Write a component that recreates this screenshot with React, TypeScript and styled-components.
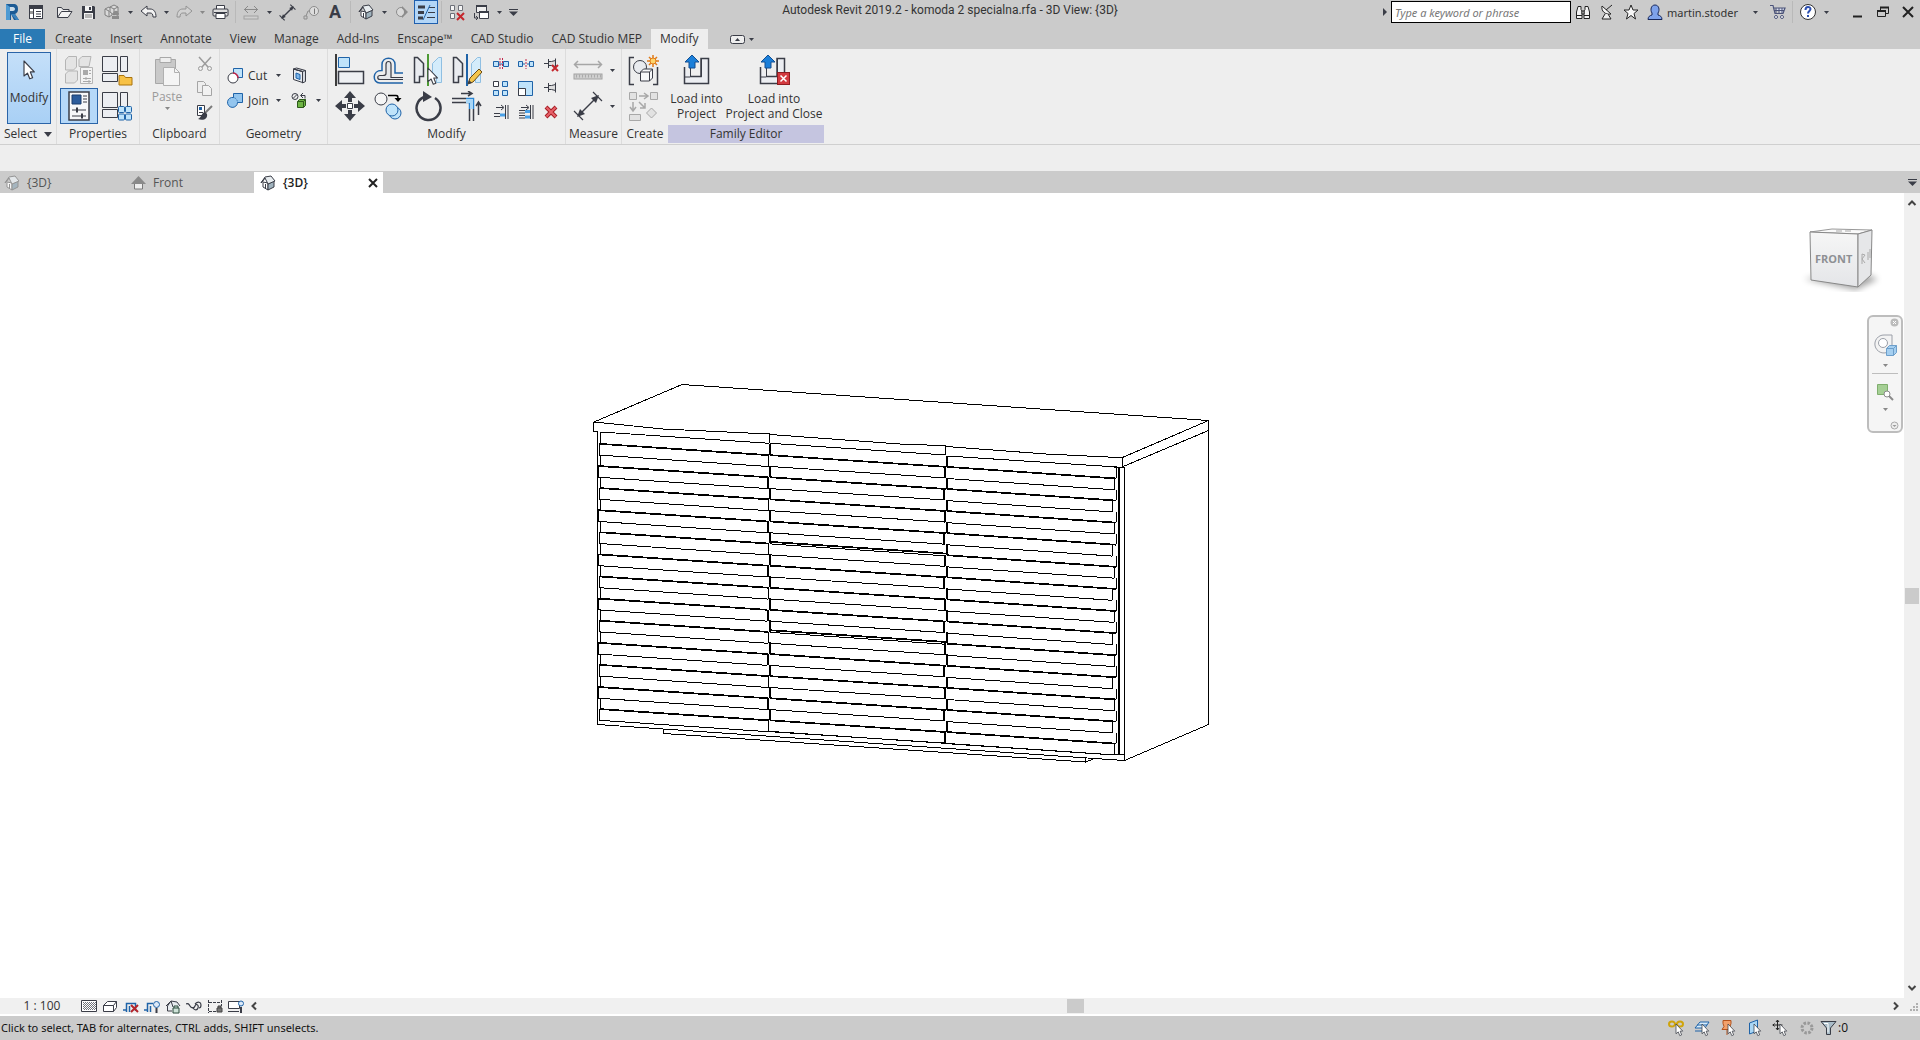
import React from "react";
import styled, { createGlobalStyle, css } from "styled-components";

const ink = "#3a3d47";
const blue = "#1f63a8";
const pale = "#bfe3fa";
const chrome = "#cbcbcb";
const panelGrey = "#eeeeee";
const smallText = `"Noto Sans", "Open Sans", sans-serif`;

const GlobalStyle = createGlobalStyle`
  * { box-sizing: border-box; }
  body {
    margin: 0;
    font-family: "Open Sans", "Noto Sans", sans-serif;
    font-size: 12px;
    line-height: 16px;
    color: #333;
    background: #fff;
  }
  button, input { font: inherit; color: inherit; }
`;

const Page = styled.div`
  display: flex;
  flex-direction: column;
  height: 100vh;
  overflow: hidden;
`;

const Plain = styled.button`
  border: 0;
  padding: 0;
  margin: 0;
  background: none;
  display: flex;
  align-items: center;
  justify-content: center;
  flex: none;
  white-space: nowrap;
`;

/* ---------- title bar ---------- */

const TitleBar = styled.header`
  display: flex;
  align-items: flex-start;
  height: 29px;
  flex: none;
  background: ${chrome};
`;

const QuickGroup = styled.div`
  display: flex;
  align-items: center;
  height: 24px;
  flex: none;
`;

const QuickButton = styled(Plain)<{ $active?: boolean; $gap?: boolean }>`
  width: 24px;
  height: 24px;
  margin-right: ${(p) => (p.$gap ? "4px" : "0")};
  ${(p) =>
    p.$active &&
    css`
      background: #b3d6f7;
      border: 1px solid #1f5fae;
    `}
`;

const LetterButton = styled(QuickButton)`
  font-family: Roboto, sans-serif;
  font-size: 18px;
  line-height: 24px;
  font-weight: 700;
  color: ${ink};
`;

const CaretButton = styled(Plain)<{ $tall?: boolean }>`
  width: 12px;
  height: ${(p) => (p.$tall ? "36px" : "24px")};
`;

const CustomizeButton = styled(Plain)`
  width: 16px;
  height: 24px;
`;

const Divider = styled.span`
  width: 1px;
  height: 22px;
  margin: 0 3px;
  background: #b9b9b9;
`;

const Title = styled.h1`
  flex: 1;
  margin: 0;
  padding-top: 2px;
  text-align: center;
  font-size: 12px;
  font-weight: 400;
  white-space: nowrap;
  font-family: Roboto, ${smallText};
`;

const SearchInput = styled.input`
  width: 180px;
  height: 22px;
  border: 1px solid #000;
  padding: 0 3px;
  background: #fff;
  border-radius: 0;
  font-family: ${smallText};
  font-size: 11px;
  font-style: italic;
  &::placeholder { color: #777; opacity: 1; }
`;

const UserButton = styled(Plain)`
  width: 82px;
  margin-top: 1px;
  font-family: ${smallText};
  font-size: 11px;
  justify-content: flex-start;
`;

const CartGroup = styled.div`
  display: flex;
  align-items: center;
  margin-left: 4px;
`;

const WindowButtons = styled.div`
  display: flex;
  margin-left: 13px;
`;

const WindowButton = styled(Plain)`
  width: 25px;
  height: 24px;
`;

/* ---------- ribbon ---------- */

const TabBar = styled.nav`
  display: flex;
  height: 20px;
  flex: none;
  background: ${chrome};
`;

const FileTab = styled(Plain)`
  width: 45px;
  margin-right: 1px;
  background: #2a7ab5;
  color: #fff;
`;

const Tab = styled(Plain)<{ $active?: boolean }>`
  padding: 0 9px;
  background: ${(p) => (p.$active ? panelGrey : "transparent")};
`;

const Collapse = styled(Plain)`
  margin-left: 22px;
  gap: 4px;
`;

const Ribbon = styled.section`
  display: flex;
  height: 96px;
  flex: none;
  background: ${panelGrey};
  border-bottom: 1px solid #cfcfcf;
`;

const Panel = styled.section<{ $w: number; $last?: boolean }>`
  display: flex;
  flex-direction: column;
  flex: none;
  width: ${(p) => p.$w}px;
  border-right: ${(p) => (p.$last ? "0" : "1px solid #dcdcdc")};
`;

const PanelBody = styled.div<{ $pad?: number; $gap?: number }>`
  display: flex;
  height: 76px;
  align-items: center;
  gap: ${(p) => p.$gap ?? 0}px;
  padding-top: 2px;
  padding-left: ${(p) => p.$pad ?? 0}px;
`;

const PanelLabel = styled.h2<{ $family?: boolean }>`
  margin: 0;
  height: 18px;
  line-height: 18px;
  font-size: 12px;
  font-weight: 400;
  display: flex;
  align-items: center;
  justify-content: center;
  gap: 7px;
  background: ${(p) => (p.$family ? "#c5c5e0" : "transparent")};
`;

const Column = styled.div`
  display: flex;
  flex-direction: column;
`;

const ToolGrid = styled.div<{ $cols: number; $w: number; $h: number; $gap?: number }>`
  display: grid;
  grid-template-columns: repeat(${(p) => p.$cols}, ${(p) => p.$w}px);
  grid-auto-rows: ${(p) => p.$h}px;
  column-gap: ${(p) => p.$gap ?? 0}px;
`;

const Tool = styled(Plain)<{ $active?: boolean }>`
  width: 100%;
  ${(p) =>
    p.$active &&
    css`
      background: #b5d8f8;
      border: 1px solid #2a64a8;
    `}
`;

const SelectTool = styled(Plain)`
  flex-direction: column;
  justify-content: flex-start;
  width: 44px;
  height: 72px;
  margin-left: 7px;
  padding-top: 7px;
  gap: 10px;
  background: linear-gradient(#c4dff9, #a9d0f5);
  border: 1px solid #2a64a8;
`;

const PasteTool = styled(Plain)`
  flex-direction: column;
  justify-content: flex-start;
  width: 40px;
  height: 72px;
  padding-top: 3px;
  color: #9a9a9a;
  margin-right: 9px;
  gap: 2px;
`;

const LoadTool = styled(Plain)<{ $w: number }>`
  flex-direction: column;
  width: ${(p) => p.$w}px;
  line-height: 15px;
  gap: 6px;
  height: 70px;
`;

const LabelTool = styled(Plain)`
  gap: 4px;
  width: 45px;
  height: 25px;
  justify-content: flex-start;
`;

const SideTool = styled(Plain)`
  width: 28px;
  padding-left: 3px;
`;

const Row = styled.div<{ $h: number }>`
  display: flex;
  align-items: center;
  height: ${(p) => p.$h}px;
`;

const OptionsBar = styled.div`
  height: 26px;
  flex: none;
  background: ${panelGrey};
`;

/* ---------- document tabs ---------- */

const DocTabs = styled.nav`
  display: flex;
  height: 22px;
  flex: none;
  background: ${chrome};
  padding-top: 1px;
`;

const DocTab = styled.div<{ $active?: boolean }>`
  display: flex;
  align-items: center;
  width: ${(p) => (p.$active ? 129 : 127)}px;
  padding: 0 5px 0 ${(p) => (p.$active ? 6 : 4)}px;
  background: ${(p) => (p.$active ? "#fff" : "transparent")};
  font-weight: ${(p) => (p.$active ? 600 : 400)};
  color: ${(p) => (p.$active ? "#222" : "#555")};
`;

const DocTabName = styled(Plain)`
  flex: 1;
  justify-content: flex-start;
  gap: 7px;
`;

const DocMenu = styled(Plain)`
  width: 16px;
  margin-left: auto;
`;

/* ---------- view ---------- */

const ViewArea = styled.main`
  flex: 1;
  min-height: 0;
  display: grid;
  grid-template-columns: 1fr 16px;
  grid-template-rows: 1fr 16px;
`;

const Canvas = styled.div`
  position: relative;
  min-height: 0;
  overflow: hidden;
  background: #fff;
`;

const Model = styled.svg`
  display: block;
  width: 100%;
  height: 100%;
`;

const ViewCube = styled.div`
  position: absolute;
  top: 30px;
  right: 22px;
`;

const NavBar = styled.div`
  position: absolute;
  top: 122px;
  right: 1px;
  width: 36px;
  height: 118px;
  display: flex;
  flex-direction: column;
  align-items: center;
  border: 2px solid #bdbdbd;
  border-radius: 6px;
  background: #f5f5f5;
`;

const NavCorner = styled(Plain)`
  align-self: flex-end;
  width: 14px;
  height: 10px;
`;

const NavTool = styled(Plain)`
  height: 46px;
  width: 28px;
  flex-direction: column;
  gap: 7px;
`;

const NavRule = styled.hr`
  width: 26px;
  margin: 0;
  border: 0;
  border-top: 1px solid #bdbdbd;
`;

const VScroll = styled.div`
  display: flex;
  flex-direction: column;
  align-items: center;
  justify-content: space-between;
  padding: 2px 0;
  background: #f0f0f0;
`;

const Thumb = styled.span<{ $w: number; $h: number }>`
  width: ${(p) => p.$w}px;
  height: ${(p) => p.$h}px;
  background: ${chrome};
`;

const ScrollButton = styled(Plain)`
  width: 16px;
  height: 16px;
`;

const BottomBar = styled.div`
  display: flex;
  align-items: center;
  background: #f0f0f0;
`;

const ScaleButton = styled(Plain)`
  width: 78px;
  padding-left: 6px;
`;

const ViewTool = styled(Plain)`
  width: 21px;
  height: 16px;
`;

const HScroll = styled.div`
  flex: 1;
  display: flex;
  align-items: center;
  justify-content: space-between;
`;

const Corner = styled.div`
  background: #f0f0f0;
  display: flex;
  align-items: flex-end;
  justify-content: flex-end;
`;

const StatusBar = styled.footer`
  display: flex;
  align-items: center;
  justify-content: space-between;
  height: 26px;
  flex: none;
  border-top: 2px solid #fff;
  background: ${chrome};
  color: #111;
  padding: 0 72px 0 1px;
`;

const StatusText = styled.p`
  margin: 0;
  font-family: ${smallText};
  font-size: 11px;
`;

const StatusTools = styled.div`
  display: flex;
  align-items: center;
`;

const StatusTool = styled(Plain)`
  width: 26px;
  height: 24px;
`;

/* ---------- drawings ---------- */

type IconProps = { w: number; h: number; children: React.ReactNode };
const Icon = ({ w, h, children }: IconProps) => (
  <svg width={w} height={h} viewBox={`0 0 ${w} ${h}`} fill="none" aria-hidden="true">
    {children}
  </svg>
);

const Caret = ({ big, color = ink }: { big?: boolean; color?: string }) => (
  <Icon w={big ? 8 : 5} h={big ? 5 : 3}>
    <path d={big ? "M0 0h8L4 5z" : "M0 0h5L2.500 3z"} fill={color} />
  </Icon>
);

const Cursor = ({ x = 0, y = 0, s = 1 }: { x?: number; y?: number; s?: number }) => (
  <path
    transform={`translate(${x} ${y}) scale(${s})`}
    d="M0 0v13l3-2.500 2 5 2.500-1-2-5H9z"
    fill="#fff"
    stroke="#3a3d47"
    strokeLinejoin="round"
  />
);

const House = ({ faded }: { faded?: boolean }) => (
  <Icon w={16} h={16}>
    <g stroke={faded ? "#8b8b8b" : ink} strokeLinejoin="round" opacity={faded ? 0.85 : 1}>
      <path d="M3 7v5l5 3V8z" fill="#fff" />
      <path d="M8 9v6l6-3V6z" fill="#9fb2bd" />
      <path d="M1 8l4-6 6-1 4 5-7 3-3-6z" fill="#e8edf0" />
      <path d="M5 3L1 8M5.500 9v4" />
    </g>
  </Icon>
);

const RevitLogo = () => (
  <Icon w={16} h={18}>
    <path d="M2 1h7c4 0 5 2 5 5s-1 4-3 5l4 6h-5l-3-6v6H2z" fill="#1c5a94" />
    <path d="M6 4h3c1 0 2 1 2 2s-1 2-2 2H6z" fill="#cbdce9" />
    <path d="M2 1l4 3v13H2z" fill="#4d9ad3" />
    <path d="M7 11l4 0 4 6h-3z" fill="#3b82bd" />
  </Icon>
);

const HomePanel = () => (
  <Icon w={16} h={16}>
    <rect x="1.500" y="1.500" width="13" height="13" fill="#fff" stroke={ink} />
    <path d="M1 2h14v3H1z" fill={ink} />
    <path d="M5.500 5v9M8 7.500h5M8 10h5M8 12.500h5" stroke={ink} />
    <path d="M2 7h3v3H2z" fill="#999" />
  </Icon>
);

const OpenFolder = () => (
  <Icon w={17} h={14}>
    <path d="M1.500 12V2.500h4l1.500 2h6V6" stroke={ink} fill="#eee" />
    <path d="M1.500 12.500l4-6h10.500l-4 6z" fill="#f3f3f3" stroke={ink} strokeLinejoin="round" />
  </Icon>
);

const Save = () => (
  <Icon w={15} h={15}>
    <path d="M1 1h12l1 1v12H1z" fill={ink} />
    <path d="M4 1h7v5H4z" fill="#f4f4f4" />
    <path d="M8 2h2v3H8z" fill={ink} />
    <path d="M3 8h9v6H3z" fill="#f4f4f4" />
    <path d="M4 10h7M4 12h7" stroke="#777" />
  </Icon>
);

const Sync = () => (
  <Icon w={17} h={16}>
    <g stroke="#7f7f7f" fill="#dadada" strokeLinejoin="round">
      <path d="M1 5l4-2 3 2v6l-3 2-4-2z" />
      <path d="M6 3l4-2 4 2v5l-4 3-4-3z" />
      <path d="M6 3l4 2 4-2M10 5v6M1 5l4 2v6" />
    </g>
    <path d="M9 10a3 3 0 1 1 5 2M8 12h7v3H8z" fill="#8b8b8b" />
  </Icon>
);

const Undo = ({ redo }: { redo?: boolean }) => (
  <Icon w={17} h={14}>
    <path
      transform={redo ? "translate(17 0) scale(-1 1)" : undefined}
      d="M1 6l6-5v3h3c4 0 6 3 6 8h-3c0-3-1-4-3-4H7v3z"
      fill={redo ? "#d2d2d2" : "#f2f2f2"}
      stroke={redo ? "#949494" : ink}
      strokeLinejoin="round"
    />
  </Icon>
);

const Print = () => (
  <Icon w={17} h={16}>
    <path d="M4.500 5V1.500h8V5" fill="#fff" stroke={ink} />
    <rect x="1" y="5" width="15" height="7" rx="1" fill="#dedede" stroke={ink} />
    <path d="M4 9.500h9v5H4z" fill="#fff" stroke={ink} />
    <path d="M2 8.500h13" stroke={ink} />
  </Icon>
);

const Ruler = ({ w, h, thin }: { w: number; h: number; thin?: boolean }) => (
  <Icon w={w} h={h}>
    <path
      d={`M1 4.500h${w - 2}M5 1L1.500 4.500 5 8M${w - 5} 1l3.500 3.500L${w - 5} 8`}
      stroke={thin ? "#8a8a8a" : "#a6a6a6"}
      strokeWidth={thin ? 1 : 1.5}
    />
    <rect x="1" y={h - (thin ? 4 : 6)} width={w - 2} height={thin ? 3 : 5} fill="#cfcfcf" stroke="#a2a2a2" />
    {!thin && <path d={`M3 ${h - 4}h${w - 5}`} stroke="#aaa" strokeDasharray="1 2" strokeWidth="3" />}
  </Icon>
);

const Dimension = ({ size }: { size: number }) => (
  <svg width={size} height={size} viewBox="0 0 30 30" fill="none" aria-hidden="true">
    <path d="M6 24L24 6" stroke={ink} strokeWidth={size > 20 ? 1.5 : 2.5} />
    <path d="M4 26l3-8 5 5zM26 4l-3 8-5-5z" fill={ink} />
    <path d="M1 20l9 9M20 1l9 9" stroke={ink} strokeWidth={size > 20 ? 1.2 : 2} />
  </svg>
);

const TagIcon = () => (
  <Icon w={16} h={15}>
    <path d="M1 11h3v3H1zM3 11l2-5h4" stroke="#8d8d8d" />
    <circle cx="11" cy="6" r="4.500" fill="#ddd" stroke="#8d8d8d" />
    <path d="M11.500 3.500V9" stroke="#777" />
  </Icon>
);

const Section = () => (
  <Icon w={14} h={14}>
    <circle cx="6" cy="7" r="4.500" fill="#d9d9d9" stroke="#8c8c8c" />
    <path d="M7 1l6 6-6 6v-2.500a4 4 0 0 0 0-7z" fill="#8c8c8c" />
  </Icon>
);

const ThinLines = () => (
  <Icon w={19} h={17}>
    <path d="M1 3h7M1 8.500h6M1 14h5" stroke={ink} strokeWidth="3" />
    <path d="M12 3.500h6M11 8.500h7M10 13.500h8" stroke={ink} />
    <path d="M13 1L6 16" stroke={blue} />
  </Icon>
);

const CloseHidden = () => (
  <Icon w={16} h={17}>
    <g stroke="#6d7078" fill="#f5f5f5">
      <path d="M1.500 1.500h4v5h-4zM9.500 1.500h4v5h-4zM1.500 9.500h4v5h-4z" />
    </g>
    <path d="M8 9l7 7M15 9l-7 7" stroke="#c5272d" strokeWidth="2" />
  </Icon>
);

const SwitchWindows = () => (
  <Icon w={17} h={17}>
    <path d="M3.500 1.500h10v7h-10z" fill="#eee" stroke={ink} />
    <path d="M6.500 7.500h9v7h-9z" fill="#fff" stroke={ink} />
    <path d="M6 8h10M3 2h11" stroke={ink} strokeWidth="2" />
    <path d="M1.500 9v5h3M3 12l2 2-2 2" stroke={ink} />
  </Icon>
);

const Customize = () => (
  <Icon w={9} h={7}>
    <path d="M0 .500h9" stroke={ink} />
    <path d="M0 2.500h9L4.500 7z" fill={ink} />
  </Icon>
);

const Binoculars = () => (
  <Icon w={16} h={16}>
    <g fill="#f3f3f3" stroke="#222">
      <path d="M3 2.500h3v3L7 7v7.500H1.500V8zM13 2.500h-3v3L9 7v7.500h5.500V8z" />
      <path d="M7 7h2v3H7zM1.500 11.500H7M9 11.500h5.500" />
    </g>
  </Icon>
);

const Satellite = () => (
  <Icon w={14} h={16}>
    <path d="M2 2c-1 5 3 9 9 8z" fill="#f5f5f5" stroke="#222" strokeLinejoin="round" />
    <path d="M6 6l6-5M5 10l-3 5h9l-3-5" stroke="#222" fill="#eee" />
  </Icon>
);

const Star = () => (
  <Icon w={16} h={16}>
    <path d="M8 1l2 5h5l-4 3.500L12.500 15 8 11.500 3.500 15 5 9.500 1 6h5z" fill="#f7f7f7" stroke="#222" />
  </Icon>
);

const Person = () => (
  <Icon w={16} h={17}>
    <path
      d="M1 15.500c0-3 2-4 4-4.500V9C3 6 4 1 8 1s5 5 3 8v2c2 .500 4 1.500 4 4.500z"
      fill="#7ea2ea"
      stroke="#17275a"
    />
  </Icon>
);

const Cart = () => (
  <Icon w={17} h={16}>
    <path d="M1 1.500h3l2 8h8M4.500 4H16l-2 5.500H6" fill="#dde2f3" stroke="#4b5378" strokeWidth="1.200" />
    <path d="M7 4v5M10 4v5M13 4v5M5 6.500h10" stroke="#4b5378" />
    <circle cx="7" cy="13" r="1.500" fill="#fff" stroke="#4b5378" />
    <circle cx="13" cy="13" r="1.500" fill="#fff" stroke="#4b5378" />
  </Icon>
);

const Help = () => (
  <Icon w={18} h={18}>
    <circle cx="9" cy="9" r="7.500" fill="#fff" stroke="#333" />
    <path d="M6.500 7c0-4 5-3.500 5-1 0 2-2.500 2-2.500 4.500M9 12v2" stroke="#2c4fb0" strokeWidth="2" />
  </Icon>
);

const Minimize = () => (
  <Icon w={9} h={12}>
    <path d="M0 10.500h9" stroke="#222" strokeWidth="2" />
  </Icon>
);
const Restore = () => (
  <Icon w={12} h={12}>
    <path d="M3.500 4V1.500h8v6H8.500" stroke="#222" />
    <path d="M.500 5.500h8v5h-8z" stroke="#222" />
    <path d="M0 5h9M3 1.500h9" stroke="#222" strokeWidth="2" />
  </Icon>
);
const Cross = ({ size = 12 }: { size?: number }) => (
  <Icon w={size} h={size}>
    <path d={`M1 1L${size - 1} ${size - 1}M${size - 1} 1L1 ${size - 1}`} stroke="#222" strokeWidth="2" />
  </Icon>
);

const SelectCursor = () => (
  <Icon w={13} h={20}>
    <Cursor x={1} y={1} s={1.15} />
  </Icon>
);

const FamilyCategory = () => (
  <Icon w={30} h={30}>
    <g fill="#e4e4e4" stroke="#b5b5b5" strokeLinejoin="round">
      <path d="M1.500 5l3-3.500h8V12l-3 3h-8zM15 4.500l3-3h9l-2 10H15z" />
      <path d="M1.500 19l3-3h9v9l-3 3h-9z" />
      <path d="M16.500 12.500h12v16h-12z" fill="#f3f3f3" />
    </g>
    <path d="M19 15h5v5h-5z" fill="#a9a9a9" />
    <path d="M25 15.500h2M25 18.500h2M19 23.500h8M19 26.500h8M22 22v3M25 25v3" stroke="#a9a9a9" />
  </Icon>
);

const TypeWindows = ({ kind }: { kind: "folder" | "types" }) => (
  <Icon w={31} h={31}>
    <g fill="#eceef2" stroke={ink}>
      <path d="M.500 1.500h15v15H.500zM18.500 1.500h7v15h-7zM.500 18.500h15v8H.500z" />
    </g>
    {kind === "folder" ? (
      <path d="M17 20.500h5l1.500 2H30v7.500H17z" fill="#f7c145" stroke="#a9730d" />
    ) : (
      <g fill={pale} stroke={blue}>
        <rect x="16.500" y="15.500" width="6" height="6" rx="1" />
        <rect x="23.500" y="15.500" width="6" height="6" rx="1" />
        <rect x="16.500" y="23" width="6" height="6" rx="1" />
        <rect x="23.500" y="23" width="6" height="6" rx="1" />
      </g>
    )}
  </Icon>
);

const Properties = () => (
  <Icon w={22} h={30}>
    <rect x="1" y="1" width="20" height="28" fill="#f7f8fa" stroke={ink} strokeWidth="1.500" />
    <path d="M4 4h9v9H4z" fill="#2c5c9c" stroke="#1b3c6c" />
    <path d="M15 5h4M15 8h4M15 11h4M4 19h14M4 25h14" stroke={ink} />
    <path d="M9 16.500v5M14 22.500v5" stroke={ink} strokeWidth="2" />
  </Icon>
);

const Paste = () => (
  <Icon w={27} h={32}>
    <path d="M1.500 4.500h20v24h-20z" fill="#c9c9c9" stroke="#a8a8a8" />
    <path d="M6 2.500h11v5H6z" fill="#eee" stroke="#a8a8a8" />
    <path d="M9.500 12.500h11l5 5v13h-16z" fill="#f4f4f4" stroke="#b0b0b0" />
    <path d="M20.500 12.500v5h5" stroke="#b0b0b0" />
  </Icon>
);

const Scissors = () => (
  <Icon w={16} h={16}>
    <path d="M2 1l9 10M14 1L5 11" stroke="#9b9b9b" strokeWidth="1.500" />
    <circle cx="3.500" cy="12.500" r="2" stroke="#9b9b9b" />
    <circle cx="12.500" cy="12.500" r="2" stroke="#9b9b9b" />
  </Icon>
);
const Copy = () => (
  <Icon w={17} h={17}>
    <path d="M1.500 1.500h6l2 2v9h-8z" fill="#eee" stroke="#a5a5a5" />
    <path d="M6.500 5.500h6l3 3v7h-9z" fill="#f2f2f2" stroke="#a5a5a5" />
  </Icon>
);
const MatchType = () => (
  <Icon w={17} h={17}>
    <path d="M1.500 1.500h7v10h-7z" fill="#fff" stroke={ink} />
    <path d="M3 3h3v3H3z" fill={blue} />
    <path d="M3 8.500h4" stroke={ink} />
    <path d="M16 2L8 10" stroke="#7b7b7b" strokeWidth="2" />
    <path d="M9 8c-4 1-3 5-7 7 5 2 10 0 9-5z" fill={ink} />
  </Icon>
);

const CutGeom = () => (
  <Icon w={17} h={17}>
    <path d="M6.500 1.500h9v9h-9z" fill={pale} stroke={blue} />
    <circle cx="6" cy="11" r="5" fill="#fff" stroke={ink} />
    <path d="M6 6a5 5 0 0 1 5 5" stroke="#c2264b" strokeWidth="1.500" />
  </Icon>
);
const JoinGeom = () => (
  <Icon w={17} h={17}>
    <path d="M6.500 1.500h9v9h-5a5 5 0 1 1-4-5z" fill="#93c5ee" stroke={blue} />
    <path d="M6.500 5.500a5 5 0 0 1 4 5" stroke={blue} strokeDasharray="1 1" />
  </Icon>
);
const SplitFace = () => (
  <Icon w={16} h={17}>
    <path d="M1.500 2l9 2.500v11l-9-3z" fill="#e8ebef" stroke={ink} />
    <path d="M1.500 2l3-1 9 2.500v11l-3 1.500v-11.500z" fill="#d5d9df" stroke={ink} />
    <path d="M1.500 2l9 2.500 3-1" stroke={ink} />
    <path d="M4 6l4 1.500v5L4 11z" fill="#7db6ea" stroke={blue} />
  </Icon>
);
const PaintGeom = () => (
  <Icon w={17} h={17}>
    <circle cx="4" cy="4.500" r="3" stroke={ink} />
    <path d="M2 6.500l4-4M10 3.500h4v3M12 1L9.500 3.500 12 6" stroke={ink} />
    <path d="M6.500 9.500l2-2h6v6l-2 2h-6z" fill="#6fb544" stroke="#2d5a1a" />
    <path d="M6.500 9.500h6v6M12.500 9.500l2-2" stroke="#2d5a1a" />
  </Icon>
);

const Align = () => (
  <Icon w={30} h={32}>
    <path d="M1 0v32" stroke="#000" strokeWidth="1.500" />
    <path d="M3.500 3.500h11v10h-11z" fill={pale} stroke={blue} />
    <path d="M3.500 17.500h25v12h-25z" fill="#eef0f3" stroke={ink} strokeWidth="1.500" />
  </Icon>
);
const Offset = () => (
  <Icon w={31} h={30}>
    <path
      d="M30 22.500H18V9.500c0-4-5-4-5 0v9c0 1.500-1 2-3 2H7c-3 0-3 4 0 4h23"
      fill="#e4e7eb"
      stroke={ink}
      strokeWidth="1.200"
    />
    <path d="M30 18H22V9.500C22 1 9 1 9 9.500v6C-1 15-1 28 7 28h23" stroke={blue} strokeWidth="1.500" />
  </Icon>
);
const Mirror = ({ draw }: { draw?: boolean }) => (
  <Icon w={30} h={32}>
    <path d="M1.500 3.500h3l6 6v13h-4v6h-5z" fill="#e9ebef" stroke={ink} strokeWidth="1.500" />
    <path d="M28.500 3.500h-3l-6 6v13h4v6h5z" fill="#d4ecfb" stroke="#8fbfe2" />
    <path d="M15 0v32" stroke={draw ? blue : "#4d9a34"} strokeWidth="2" />
    {draw ? (
      <g>
        <path d="M16 30l2-6L27 15l3 3-9 10z" fill="#f4c64c" stroke="#6a4a12" />
        <path d="M16 30l1-4 3 3z" fill={ink} />
      </g>
    ) : (
      <Cursor x={15} y={14} s={1.05} />
    )}
  </Icon>
);
const Move = () => (
  <Icon w={30} h={30}>
    <path
      d="M15 0l6 7h-4v4h-4V7H9zM15 30l6-7h-4v-4h-4v4H9zM0 15l7-6v4h4v4H7v4zM30 15l-7-6v4h-4v4h4v4z"
      fill={ink}
    />
    <path d="M12.500 12.500h5v5h-5z" fill="#fff" stroke={ink} />
  </Icon>
);
const CopyTool = () => (
  <Icon w={29} h={30}>
    <circle cx="7" cy="8" r="6" fill="#f5f5f5" stroke={ink} />
    <path d="M14 4.500h8c2 0 2 1 2 4" stroke="#000" strokeWidth="1.500" />
    <path d="M20.500 7h7L24 11z" fill="#000" />
    <circle cx="21" cy="22" r="6" fill={pale} stroke={blue} />
    <circle cx="18" cy="19" r="6" fill={pale} stroke={blue} />
  </Icon>
);
const Rotate = () => (
  <Icon w={28} h={31}>
    <path d="M21 7a12 12 0 1 1-11-1" stroke={ink} strokeWidth="2.500" />
    <path d="M9 0l9 6-9 5z" fill={ink} />
  </Icon>
);
const Trim = () => (
  <Icon w={31} h={31}>
    <path d="M1 7.500h14M1 11.500h14M18.500 18v12M22.500 18v12" stroke={ink} strokeWidth="1.500" />
    <path d="M15 7.500h7.500V18M15 11.500h3.500V18" stroke="#2c86d4" strokeWidth="1.500" />
    <path d="M15 8h7v10h-3v-6h-4z" fill="#a8d6f7" />
    <path d="M10 2.500h10M17 0l4 2.500L17 5M27.500 24V12M25 15l2.500-4 2.500 4" stroke={ink} strokeWidth="1.500" />
  </Icon>
);
const Split = ({ gap }: { gap?: boolean }) => (
  <Icon w={16} h={12}>
    <path
      d={gap ? "M.500 3.500h4v5h-4zM11.500 3.500h4v5h-4z" : "M.500 3.500h5v5h-5zM10.500 3.500h5v5h-5z"}
      fill={pale}
      stroke={blue}
    />
    <path d={gap ? "M4 6h3M9 6h3" : "M5 6h6"} stroke={blue} />
    <path d={gap ? "M8 1v10" : "M7 0v12M9.500 0v12"} stroke="#c2264b" strokeDasharray="2 1" />
  </Icon>
);
const ArrayIcon = () => (
  <Icon w={17} h={17}>
    <path d="M1.500 1.500h5v5h-5z" fill="#fff" stroke={ink} />
    <path d="M10.500 1.500h5v5h-5zM1.500 10.500h5v5h-5zM10.500 10.500h5v5h-5z" fill={pale} stroke={blue} />
  </Icon>
);
const Scale = () => (
  <Icon w={17} h={17}>
    <path d="M1.500 1.500h14v14h-14z" fill={pale} stroke={blue} />
    <path d="M1.500 8.500h7v7h-7z" fill="#fff" stroke={ink} />
  </Icon>
);
const Pin = ({ off }: { off?: boolean }) => (
  <Icon w={16} h={16}>
    <path d="M6 5.500h3l3-1v6l-3-1H6z" fill="#ddd" />
    <path d="M1 7.500h4M5.500 3v9M12.500 2.500v10M5.500 5.500h3l4-1M5.500 9.500h3l4 1" stroke={ink} />
    {off && <path d="M9 9l6 6M15 9l-6 6" stroke="#c5272d" strokeWidth="2" />}
  </Icon>
);
const TrimSingle = ({ multi }: { multi?: boolean }) => (
  <Icon w={16} h={16}>
    <path d="M12.500 1v14M15 1v14" stroke={ink} />
    <path d={multi ? "M1 6.500h6M1 9h6M1 14h6M1 11.500h6" : "M1 9.500h6M1 12.500h6"} stroke={ink} />
    <path d={multi ? "M7 7.500h5M7 13h5" : "M7 11h5"} stroke="#4aa0e6" strokeWidth="3" />
    <path d="M3 3.500h7M8 1l3 2.500L8 6" stroke={ink} />
  </Icon>
);
const Delete = () => (
  <Icon w={14} h={14}>
    <path d="M2 2l10 10M12 2L2 12" stroke="#a61d24" strokeWidth="4" />
    <path d="M2.500 2.500l9 9M11.500 2.500l-9 9" stroke="#e8626a" strokeWidth="2" />
  </Icon>
);

const CreateGroup = () => (
  <Icon w={32} h={31}>
    <path d="M6 2.500H1.500v27H6M25 29.500h4.500V12" stroke={ink} strokeWidth="1.500" />
    <circle cx="12" cy="12" r="6.500" fill="#e9ebef" stroke={ink} />
    <path d="M12.500 17l3-3h9v9l-3 3h-9z" fill="#f7f8fa" stroke={ink} />
    <path d="M12.500 17h9v9M21.500 17l3-3" stroke={ink} />
    <path d="M25 0v12M19 6h12M21 2l8 8M29 2l-8 8" stroke="#e07b1a" strokeWidth="1.500" />
    <circle cx="25" cy="6" r="3" fill="#fdd46b" stroke="#e07b1a" />
  </Icon>
);
const CreateSimilar = () => (
  <Icon w={31} h={31}>
    <g stroke="#a8a8a8" fill="#e2e2e2">
      <path d="M1.500 1.500h7v7h-7zM22.500 1.500h7v7h-7zM1.500 23.500h11v6h-11zM23.500 17l5 5-5 5-5-5z" />
      <path d="M11 5h8M16 2l4 3-4 3M5 11v8M2 16l3 4 3-4M11 11l6 6M17 12v5h-5" fill="none" strokeWidth="1.500" />
    </g>
  </Icon>
);
const LoadIcon = ({ close }: { close?: boolean }) => (
  <Icon w={close ? 31 : 27} h={30}>
    <path d="M1.500 12v16.500h24v-25H18v18H8" fill="#eceef2" stroke={ink} strokeWidth="1.500" />
    <path d="M1.500 22h6V11M18.500 4v17.500h-11" stroke={ink} />
    <path d="M9 0l7 7h-4v6H6V7H2z" fill="#1b7fd9" stroke="#124f92" />
    {close && (
      <g>
        <rect x="18.500" y="17.500" width="12" height="12" fill="#d2393f" stroke="#8e1b20" />
        <path d="M21.500 20.500l6 6M27.500 20.500l-6 6" stroke="#fff" strokeWidth="1.500" />
      </g>
    )}
  </Icon>
);

const FrontHouse = () => (
  <Icon w={15} h={14}>
    <path d="M3.500 7.500h8V13h-8z" fill="#eee" stroke="#7a7a7a" />
    <path d="M7.500 0L15 8H0z" fill="#8a8a8a" />
  </Icon>
);

const Chevron = ({ dir }: { dir: "up" | "down" | "left" | "right" }) => {
  const turn = { up: 0, right: 90, down: 180, left: 270 }[dir];
  return (
    <Icon w={10} h={10}>
      <path d="M1.500 7L5 3.500 8.500 7" transform={`rotate(${turn} 5 5)`} stroke="#444" strokeWidth="2" />
    </Icon>
  );
};

const viewIcons: { name: string; art: React.ReactNode }[] = [
  {
    name: "Detail level",
    art: (
      <g>
        <path d="M.500 1.500h15v11H.500z" fill="#fff" stroke={ink} />
        <path
          d="M2 3.500h13M2 5.500h13M2 7.500h13M2 9.500h13"
          stroke="#70737b"
          strokeDasharray="1 1"
        />
        <path d="M3 4.500h12M3 6.500h12M3 8.500h12M3 10.500h12" stroke="#70737b" strokeDasharray="1 1" />
      </g>
    ),
  },
  {
    name: "Visual style",
    art: <path d="M1.500 6.500h10v6h-10zM1.500 6.500l4-4h9v6l-3 4M11.500 6.500l3-4" fill="#fff" stroke={ink} />,
  },
  {
    name: "Crop view",
    art: (
      <g>
        <path d="M3.500 13V4.500h9V12M0 11h3M6.500 7v6" stroke={blue} strokeWidth="1.500" />
        <path d="M8 6l7 7M15 6l-7 7" stroke="#b3262b" strokeWidth="2" />
      </g>
    ),
  },
  {
    name: "Show crop region",
    art: (
      <g>
        <path d="M3.500 13V4.500H9M0 11h3M6.500 7v6" stroke={blue} strokeWidth="1.500" />
        <circle cx="12.500" cy="5.500" r="3" fill="#dce9f8" stroke={blue} />
        <path d="M12.500 9v5" stroke={ink} strokeWidth="2" />
      </g>
    ),
  },
  {
    name: "Lock 3D view",
    art: (
      <g>
        <path d="M2.500 12V7L6 2l6 1 3 4M1 7l5-5 2 6M2.500 12H7" fill="#e7ebee" stroke={ink} />
        <path d="M8 9h6v5H8zM9 9V7h4v2" fill="#cfe3d8" stroke="#2b4b3c" />
      </g>
    ),
  },
  {
    name: "Hide or isolate",
    art: (
      <path
        d="M0 5c2-1 3 0 4 2s4 3 5 0 4-1 3 2-5 2-5-1M9 5c3-3 6-2 6 1s-1 3-2 3"
        stroke={ink}
        strokeWidth="1.200"
      />
    ),
  },
  {
    name: "Reveal constraints",
    art: (
      <g>
        <path d="M1.500 1v13M14.500 1v6M2 3.500h12M2 12.500h7" stroke={ink} strokeDasharray="3 1" />
        <path d="M10 9h5v4h-5zM11 9V7h3v2" fill="#777" stroke="#444" />
      </g>
    ),
  },
  {
    name: "Worksharing display",
    art: (
      <g>
        <path d="M.500 2.500h11v7H.500z" fill="#fff" stroke={ink} />
        <path d="M0 12.500h11" stroke={ink} />
        <circle cx="13" cy="4.500" r="2.500" fill="#dce9f8" stroke={blue} />
        <path d="M13 8v6" stroke={ink} strokeWidth="2" />
      </g>
    ),
  },
];

const statusIcons: { name: string; art: React.ReactNode }[] = [
  {
    name: "Select links",
    art: (
      <path
        d="M1 5a3 2.500 0 0 1 6 0 3 2.500 0 0 1-6 0zM9 5a3 2.500 0 0 1 6 0 3 2.500 0 0 1-6 0zM6 5h4"
        stroke="#cfa40c"
        strokeWidth="2"
      />
    ),
  },
  { name: "Select underlay", art: <path d="M1 9l5-6h9l-4 6zM1 12h9M3 6h10" fill="#d8ecfa" stroke={blue} /> },
  {
    name: "Select pinned",
    art: <path d="M3 1.500h8v3l-1 3 2 3H2l2-3-1-3zM7 11v5" fill="#f2a06a" stroke="#b4531c" />,
  },
  { name: "Select by face", art: <path d="M3.500 4l8-3v11l-8 3z" fill="#a9d6f5" stroke={blue} /> },
  {
    name: "Drag on selection",
    art: (
      <path
        d="M5.500 1v10M.500 6h10M4 3l1.500-2L7 3M4 9l1.500 2L7 9M2.500 4.500L1 6l1.500 1.500"
        stroke="#222"
      />
    ),
  },
];

/* ---------- the cabinet ---------- */

const pitch = 22.1;
const slats = Array.from({ length: 13 }, (_, i) => i);

const CabinetModel = () => (
  <Model viewBox="0 193 1904 805" preserveAspectRatio="xMidYMid meet" role="img" aria-label="3D view of the cabinet">
    <g stroke="#000" fill="none" shapeRendering="crispEdges">
      <path d="M594 422L682 384.500L1208.500 420.500L1122 457.700V467L1208.500 430.500" />
      <path d="M593.500 422V431.500H597M594 422L663 429L769.500 434V443M770 434.500L900 444L945.500 445.700V455M946 446.500L1046 454L1122 457.700" />
      <path d="M1208.500 420V724.500L1124.500 760.500V467" />
      <path d="M597.500 431V724.500L1124 760.500M663.500 729V733.500L1086 762L1093 759M1085.500 758V763" />
      <path d="M600.500 432L769.500 443.300M770 443.300L946 455M947 456L1117 467M1114 467.500H1124" />
      <path d="M768.500 720V731.300L945 743.300L1115 755M1115 754.500H1124.500M945.500 732V743" />
      <path d="M600.500 432V443.700" />
      <path d="M1119 467V754" strokeWidth="2" />
      {slats.map((i) => {
        const y = 443.5 + i * pitch;
        const odd = i % 2 === 1;
        const lift = i === 4 || i === 8 ? 1.7 : 0;
        const a = odd ? 597.5 : 599.5;
        const b = odd ? 767.5 : 768.5;
        const c = odd ? 944 : 945;
        const d = odd ? 1112.5 : 1114.5;
        return (
          <g key={i}>
            <path
              d={`M${a} ${y}L${b} ${y + 11.3}M770 ${y + 11.3 - lift}L946 ${y + 23 - lift}M947 ${y + 23}L1116 ${y + 34.6}`}
            />
            <path
              d={`M${a} ${y + 0.7}L${b} ${y + 12}M770 ${y + 12 - lift}L946 ${y + 23.7 - lift}M947 ${y + 23.7}L1116 ${y + 35.3}`}
            />
            {lift > 0 && <path d={`M770 ${y + 12}L946 ${y + 24}`} />}
            <path
              d={`M${a} ${y + 11.6}L${b} ${y + 23}M770 ${y + 23}L945 ${y + 34.4}M947 ${y + 35}L${d} ${y + 46.3}`}
            />
            <path d={`M${a} ${y}V${y + 11.6}`} strokeWidth={odd ? 2 : 1} />
            <path d={`M${b} ${y + 11.3}V${y + 23}`} strokeWidth={odd ? 2 : 1} />
            <path d={`M${c} ${y + 23}V${y + 34.4}`} strokeWidth="2" />
            <path d={`M${d} ${y + 34.6}V${y + 46.3}`} />
            <path d={`M770 ${y}V${y + 11.3}M947 ${y + 12}V${y + 23}`} strokeWidth="2" />
            <path d={`M1116.500 ${y + 24}V${y + 34.6}`} />
            {i < 12 && <path d={`M600.500 ${y + 11.6}V${y + pitch}`} />}
          </g>
        );
      })}
    </g>
  </Model>
);

const CubeText = styled.text`
  font-size: 11px;
  font-weight: 700;
  fill: #8e9094;
`;

const Cube = () => (
  <svg width="82" height="72" viewBox="0 0 82 72" aria-label="View cube">
    <defs>
      <linearGradient id="cubeFront" x1="0" y1="0" x2="0" y2="1">
        <stop offset="0" stopColor="#f6f6f6" />
        <stop offset="1" stopColor="#e4e5e8" />
      </linearGradient>
      <filter id="cubeShade">
        <feGaussianBlur stdDeviation="3" />
      </filter>
    </defs>
    <path d="M4 56l52 11 22-11-20-8z" fill="#000" opacity=".35" filter="url(#cubeShade)" />
    <path d="M10 9l48 2 14-4-40-1z" fill="#fafafa" stroke="#999" />
    <path d="M36 8h6M45 8h6" stroke="#aaa" />
    <path d="M10 9l48 2v53l-47-7z" fill="url(#cubeFront)" stroke="#888" />
    <path d="M58 11l14-4-1 45-13 12z" fill="#e6e7e9" stroke="#888" />
    <CubeText x="15" y="40">FRONT</CubeText>
    <path d="M62 41V31l3 1-3 4 3 4M68 37v-8M70 35v-9" stroke="#aaa" fill="none" />
  </svg>
);

/* ---------- page ---------- */

const tabs = ["Create", "Insert", "Annotate", "View", "Manage", "Add-Ins", "Enscape™", "CAD Studio", "CAD Studio MEP"];

const Menu = ({ label, faded, tall }: { label: string; faded?: boolean; tall?: boolean }) => (
  <CaretButton aria-label={`${label} options`} $tall={tall}>
    <Caret color={faded ? "#888" : ink} />
  </CaretButton>
);

type ToolProps = { label: string; active?: boolean; gap?: boolean; children: React.ReactNode };

const ToolButton = ({ label, active, children }: ToolProps) => (
  <Tool aria-label={label} $active={active}>
    {children}
  </Tool>
);

const Quick = ({ label, active, gap, children }: ToolProps) => (
  <QuickButton aria-label={label} $active={active} $gap={gap}>
    {children}
  </QuickButton>
);

export default function App() {
  return (
    <Page>
      <GlobalStyle />
      <TitleBar>
        <QuickGroup>
          <Quick label="Revit"><RevitLogo /></Quick>
          <Quick label="Home" gap><HomePanel /></Quick>
          <Quick label="Open"><OpenFolder /></Quick>
          <Quick label="Save"><Save /></Quick>
          <Quick label="Synchronize"><Sync /></Quick>
          <Menu label="Synchronize" />
          <Quick label="Undo"><Undo /></Quick>
          <Menu label="Undo" />
          <Quick label="Redo"><Undo redo /></Quick>
          <Menu label="Redo" faded />
          <Quick label="Print"><Print /></Quick>
          <Divider />
          <Quick label="Measure"><Ruler w={16} h={15} thin /></Quick>
          <Menu label="Measure" />
          <Quick label="Aligned dimension"><Dimension size={17} /></Quick>
          <Quick label="Tag by category"><TagIcon /></Quick>
          <LetterButton aria-label="Text">A</LetterButton>
          <Divider />
          <Quick label="Default 3D view"><House /></Quick>
          <Menu label="3D view" />
          <Quick label="Section"><Section /></Quick>
          <Quick label="Thin lines" active><ThinLines /></Quick>
          <Divider />
          <Quick label="Close hidden windows"><CloseHidden /></Quick>
          <Quick label="Switch windows"><SwitchWindows /></Quick>
          <Menu label="Switch windows" />
          <CustomizeButton aria-label="Customize toolbar"><Customize /></CustomizeButton>
        </QuickGroup>
        <Title>Autodesk Revit 2019.2 - komoda 2 specialna.rfa - 3D View: {"{3D}"}</Title>
        <QuickGroup>
          <CaretButton aria-label="Collapse search">
            <Icon w={4} h={8}>
              <path d="M0 0l4 4-4 4z" fill={ink} />
            </Icon>
          </CaretButton>
          <SearchInput type="text" aria-label="Search" placeholder="Type a keyword or phrase" />
          <Quick label="Find"><Binoculars /></Quick>
          <Quick label="Communication center"><Satellite /></Quick>
          <Quick label="Favorites"><Star /></Quick>
          <Quick label="Account"><Person /></Quick>
          <UserButton>martin.stoder</UserButton>
          <Menu label="Account" />
          <CartGroup>
            <Quick label="App store"><Cart /></Quick>
            <Divider />
            <Quick label="Help"><Help /></Quick>
            <Menu label="Help" />
          </CartGroup>
          <WindowButtons>
            <WindowButton aria-label="Minimize"><Minimize /></WindowButton>
            <WindowButton aria-label="Restore"><Restore /></WindowButton>
            <WindowButton aria-label="Close"><Cross /></WindowButton>
          </WindowButtons>
        </QuickGroup>
      </TitleBar>

      <TabBar>
        <FileTab>File</FileTab>
        {tabs.map((t) => (
          <Tab key={t}>{t}</Tab>
        ))}
        <Tab $active>Modify</Tab>
        <Collapse aria-label="Ribbon display">
          <Icon w={15} h={9}>
            <rect x=".500" y=".500" width="14" height="8" rx="2" fill="#eee" stroke={ink} />
            <path d="M5 6l2.500-3L10 6z" fill={ink} />
          </Icon>
          <Caret />
        </Collapse>
      </TabBar>

      <Ribbon>
        <Panel $w={57}>
          <PanelBody>
            <SelectTool><SelectCursor />Modify</SelectTool>
          </PanelBody>
          <PanelLabel>Select <Caret big /></PanelLabel>
        </Panel>
        <Panel $w={83}>
          <PanelBody $pad={3}>
            <ToolGrid $cols={2} $w={38} $h={36}>
              <ToolButton label="Family category"><FamilyCategory /></ToolButton>
              <ToolButton label="Family types folder"><TypeWindows kind="folder" /></ToolButton>
              <ToolButton label="Properties" active><Properties /></ToolButton>
              <ToolButton label="Family types"><TypeWindows kind="types" /></ToolButton>
            </ToolGrid>
          </PanelBody>
          <PanelLabel>Properties</PanelLabel>
        </Panel>
        <Panel $w={80}>
          <PanelBody $pad={7}>
            <PasteTool disabled><Paste />Paste<Caret color="#888" /></PasteTool>
            <ToolGrid $cols={1} $w={17} $h={24}>
              <ToolButton label="Cut to clipboard"><Scissors /></ToolButton>
              <ToolButton label="Copy to clipboard"><Copy /></ToolButton>
              <ToolButton label="Match type"><MatchType /></ToolButton>
            </ToolGrid>
          </PanelBody>
          <PanelLabel>Clipboard</PanelLabel>
        </Panel>
        <Panel $w={108}>
          <PanelBody $pad={7}>
            <Column>
              <Row $h={25}>
                <LabelTool><CutGeom />Cut</LabelTool>
                <Menu label="Cut" />
                <SideTool aria-label="Split face"><SplitFace /></SideTool>
              </Row>
              <Row $h={25}>
                <LabelTool><JoinGeom />Join</LabelTool>
                <Menu label="Join" />
                <SideTool aria-label="Paint"><PaintGeom /></SideTool>
                <Menu label="Paint" />
              </Row>
            </Column>
          </PanelBody>
          <PanelLabel>Geometry</PanelLabel>
        </Panel>
        <Panel $w={238}>
          <PanelBody $pad={2} $gap={2}>
            <ToolGrid $cols={4} $w={39} $h={36}>
              <ToolButton label="Align"><Align /></ToolButton>
              <ToolButton label="Offset"><Offset /></ToolButton>
              <ToolButton label="Mirror, pick axis"><Mirror /></ToolButton>
              <ToolButton label="Mirror, draw axis"><Mirror draw /></ToolButton>
              <ToolButton label="Move"><Move /></ToolButton>
              <ToolButton label="Copy"><CopyTool /></ToolButton>
              <ToolButton label="Rotate"><Rotate /></ToolButton>
              <ToolButton label="Trim to corner"><Trim /></ToolButton>
            </ToolGrid>
            <ToolGrid $cols={3} $w={25} $h={24}>
              <ToolButton label="Split element"><Split /></ToolButton>
              <ToolButton label="Split with gap"><Split gap /></ToolButton>
              <ToolButton label="Unpin"><Pin off /></ToolButton>
              <ToolButton label="Array"><ArrayIcon /></ToolButton>
              <ToolButton label="Scale"><Scale /></ToolButton>
              <ToolButton label="Pin"><Pin /></ToolButton>
              <ToolButton label="Trim single"><TrimSingle /></ToolButton>
              <ToolButton label="Trim multiple"><TrimSingle multi /></ToolButton>
              <ToolButton label="Delete"><Delete /></ToolButton>
            </ToolGrid>
          </PanelBody>
          <PanelLabel>Modify</PanelLabel>
        </Panel>
        <Panel $w={56}>
          <PanelBody $pad={7} $gap={3}>
            <Column>
              <Row $h={36}>
                <ToolButton label="Measure"><Ruler w={30} h={20} /></ToolButton>
              </Row>
              <Row $h={36}>
                <ToolButton label="Aligned dimension"><Dimension size={30} /></ToolButton>
              </Row>
            </Column>
            <Column>
              <Menu label="Measure" tall />
              <Menu label="Dimension" tall />
            </Column>
          </PanelBody>
          <PanelLabel>Measure</PanelLabel>
        </Panel>
        <Panel $w={46} $last>
          <PanelBody $pad={2}>
            <ToolGrid $cols={1} $w={39} $h={36}>
              <ToolButton label="Create group"><CreateGroup /></ToolButton>
              <ToolButton label="Create similar"><CreateSimilar /></ToolButton>
            </ToolGrid>
          </PanelBody>
          <PanelLabel>Create</PanelLabel>
        </Panel>
        <Panel $w={156} $last>
          <PanelBody>
            <LoadTool $w={57}>
              <LoadIcon />
              <span>Load into<br />Project</span>
            </LoadTool>
            <LoadTool $w={98}>
              <LoadIcon close />
              <span>Load into<br />Project and Close</span>
            </LoadTool>
          </PanelBody>
          <PanelLabel $family>Family Editor</PanelLabel>
        </Panel>
      </Ribbon>
      <OptionsBar />

      <DocTabs>
        <DocTab>
          <DocTabName><House faded />{"{3D}"}</DocTabName>
        </DocTab>
        <DocTab>
          <DocTabName><FrontHouse />Front</DocTabName>
        </DocTab>
        <DocTab $active>
          <DocTabName><House />{"{3D}"}</DocTabName>
          <Plain aria-label="Close view"><Cross size={10} /></Plain>
        </DocTab>
        <DocMenu aria-label="View list"><Customize /></DocMenu>
      </DocTabs>

      <ViewArea>
        <Canvas>
          <CabinetModel />
          <ViewCube><Cube /></ViewCube>
          <NavBar>
            <NavCorner aria-label="Close navigation bar">
              <Icon w={9} h={9}>
                <circle cx="4.500" cy="4.500" r="4" fill="#bbb" />
                <path d="M3 3l3 3M6 3L3 6" stroke="#fff" />
              </Icon>
            </NavCorner>
            <NavTool aria-label="Steering wheel">
              <Icon w={24} h={24}>
                <path d="M19 12V2h-8a9 9 0 1 0 4 17" fill="#f3f3f3" stroke="#9b9fa8" />
                <circle cx="10" cy="10" r="4.500" fill="#fff" stroke="#9b9fa8" />
                <path d="M13.500 15.500l3-3h7v7l-3 3h-7z" fill="#a5cff0" stroke="#6d9fcb" />
                <path d="M13.500 15.500h7v7M20.500 15.500l3-3" stroke="#6d9fcb" />
              </Icon>
              <Caret color="#888" />
            </NavTool>
            <NavRule />
            <NavTool aria-label="Zoom">
              <Icon w={18} h={18}>
                <path d="M1.500 1.500h10v10h-10z" fill="#a5cf95" stroke="#7fae6d" />
                <circle cx="11" cy="11" r="3" fill="#fff" stroke="#8a8a8a" />
                <path d="M13 13l4 4" stroke="#8a8a8a" strokeWidth="2" />
              </Icon>
              <Caret color="#888" />
            </NavTool>
            <NavCorner aria-label="Navigation bar options">
              <Icon w={9} h={9}>
                <circle cx="4.500" cy="4.500" r="3.500" fill="#eee" stroke="#aaa" />
                <path d="M2.500 4h4l-2 2z" fill="#999" />
              </Icon>
            </NavCorner>
          </NavBar>
        </Canvas>
        <VScroll>
          <ScrollButton aria-label="Scroll up"><Chevron dir="up" /></ScrollButton>
          <Thumb $w={14} $h={16} />
          <ScrollButton aria-label="Scroll down"><Chevron dir="down" /></ScrollButton>
        </VScroll>
        <BottomBar>
          <ScaleButton>1 : 100</ScaleButton>
          {viewIcons.map((v) => (
            <ViewTool key={v.name} aria-label={v.name}>
              <Icon w={16} h={15}>{v.art}</Icon>
            </ViewTool>
          ))}
          <HScroll>
            <ScrollButton aria-label="Scroll left"><Chevron dir="left" /></ScrollButton>
            <Thumb $w={17} $h={14} />
            <ScrollButton aria-label="Scroll right"><Chevron dir="right" /></ScrollButton>
          </HScroll>
        </BottomBar>
        <Corner>
          <Icon w={12} h={12}>
            <path d="M8 2h2M5 5h2M8 5h2M2 8h2M5 8h2M8 8h2" stroke="#b0b0b0" strokeWidth="2" />
          </Icon>
        </Corner>
      </ViewArea>

      <StatusBar>
        <StatusText>Click to select, TAB for alternates, CTRL adds, SHIFT unselects.</StatusText>
        <StatusTools>
          {statusIcons.map((s) => (
            <StatusTool key={s.name} aria-label={s.name}>
              <Icon w={18} h={18}>
                {s.art}
                <Cursor x={8} y={5} s={0.75} />
              </Icon>
            </StatusTool>
          ))}
          <StatusTool aria-label="Background processes">
            <Icon w={14} h={14}>
              <circle cx="7" cy="7" r="5" stroke="#999" strokeWidth="3" strokeDasharray="2.500 1.400" />
            </Icon>
          </StatusTool>
          <Plain aria-label="Filter">
            <Icon w={18} h={16}>
              <path d="M1 1.500h15L10.500 8v6.500h-4V8z" fill="#a9bcc8" stroke={ink} />
              <path d="M4 3.500h4v9" stroke="#fff" />
            </Icon>
            :0
          </Plain>
        </StatusTools>
      </StatusBar>
    </Page>
  );
}
